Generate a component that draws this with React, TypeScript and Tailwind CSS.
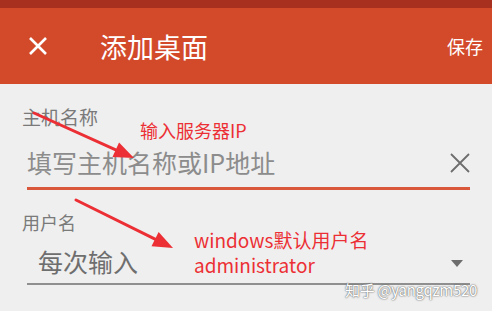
import React from "react";

const font = { fontFamily: '"Noto Sans CJK SC", "Noto Sans", sans-serif' };

function Arrow({ x1, y1, x2, y2 }: { x1: number; y1: number; x2: number; y2: number }) {
	const a = Math.atan2(y2 - y1, x2 - x1);
	const len = 20;
	const w = 8;
	const bx = x2 - len * Math.cos(a);
	const by = y2 - len * Math.sin(a);
	const px = -Math.sin(a) * w;
	const py = Math.cos(a) * w;
	return (
		<g>
			<line x1={x1} y1={y1} x2={bx} y2={by} stroke="#ec2f34" strokeWidth={3} strokeLinecap="round" />
			<polygon points={`${x2},${y2} ${bx + px},${by + py} ${bx - px},${by - py}`} fill="#ec2f34" />
		</g>
	);
}

export default function App() {
	return (
		<div className="relative w-[492px] h-[311px] overflow-hidden bg-[#efefef]" style={font}>
			<div className="h-2 bg-[#a8301f]" />
			<div className="h-[76px] bg-[#d34a2b] flex items-center text-white">
				<svg width="20" height="20" viewBox="0 0 20 20" className="ml-[28px]">
					<path d="M2 2 L18 18 M18 2 L2 18" stroke="white" strokeWidth="2.6" />
				</svg>
				<span className="ml-[52px] text-[27px] leading-none">添加桌面</span>
				<span className="ml-auto mr-[9px] text-[18px] leading-none">保存</span>
			</div>

			<div className="pl-[22px] pr-[22px]">
				<div className="pt-[23px] text-[19px] leading-none text-[#7a7a7a]">主机名称</div>
				<div className="mt-[24px] ml-[5px] flex items-center">
					<span className="text-[25px] leading-none text-[#8c8c8c]">填写主机名称或IP地址</span>
					<svg width="20" height="20" viewBox="0 0 20 20" className="ml-auto">
						<path d="M1 1 L19 19 M19 1 L1 19" stroke="#6d6d6d" strokeWidth="1.8" />
					</svg>
				</div>
				<div className="mt-[12px] ml-[5px] h-[3px] bg-[#d9573a]" />

				<div className="mt-[23px] text-[18px] leading-none text-[#7a7a7a]">用户名</div>
				<div className="mt-[18px] ml-[16px] flex items-center">
					<span className="text-[25px] leading-none text-[#6e6e6e]">每次输入</span>
					<svg width="12" height="7" viewBox="0 0 12 7" className="ml-auto mr-[7px] mt-[4px]">
						<polygon points="0,0 12,0 6,7" fill="#6d6d6d" />
					</svg>
				</div>
				<div className="mt-[9px] ml-[5px] h-[2px] bg-[#8f8f8f]" />
			</div>

			<div className="absolute left-[140px] top-[121px] text-[18px] leading-none text-[#ec2f34]">输入服务器IP</div>
			<div className="absolute left-[194px] top-[227px] text-[19px] leading-[25px] text-[#ec2f34]">
				windows默认用户名
				<br />
				administrator
			</div>

			<svg className="absolute left-0 top-0" width="492" height="311">
				<Arrow x1={34} y1={113} x2={134} y2={158} />
				<Arrow x1={76} y1={200} x2={173} y2={248} />
			</svg>

			<div
				className="absolute left-[345px] top-[282px] text-[15px] leading-none text-white tracking-[-0.3px]"
				style={{ textShadow: "0 0 2px #666, 0 0 1px #666" }}
			>
				知乎 @yangqzm520
			</div>
		</div>
	);
}
